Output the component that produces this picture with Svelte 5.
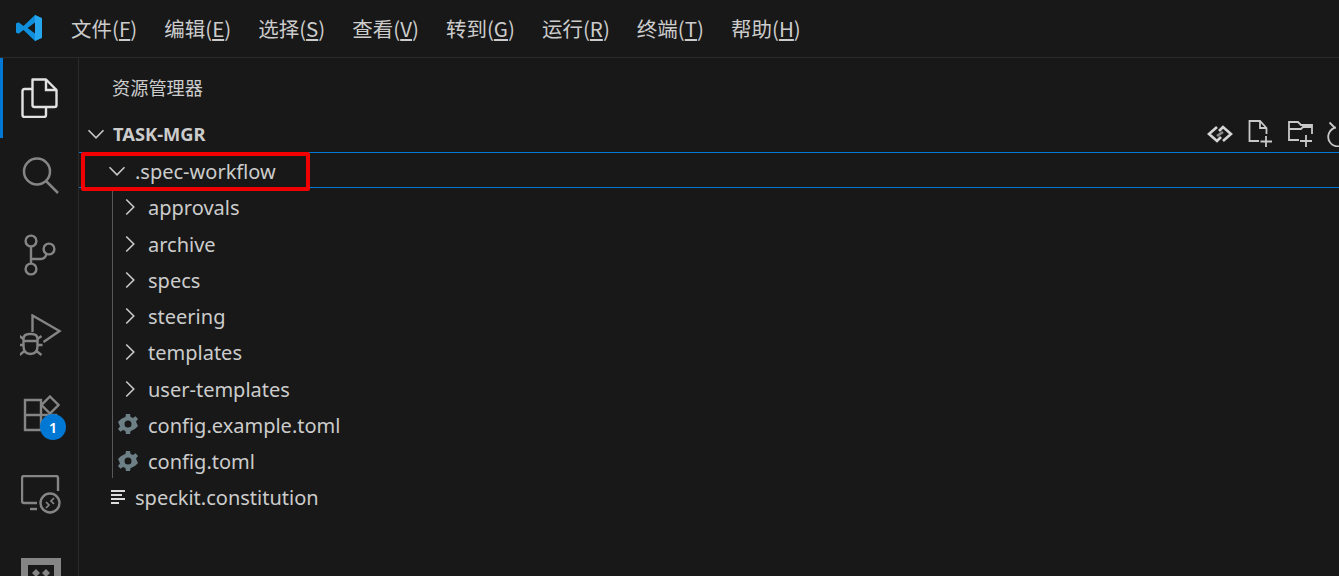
<script>
  const menus = [
    ['文件', 'F'], ['编辑', 'E'], ['选择', 'S'], ['查看', 'V'],
    ['转到', 'G'], ['运行', 'R'], ['终端', 'T'], ['帮助', 'H']
  ];
  const folders = ['approvals', 'archive', 'specs', 'steering', 'templates', 'user-templates'];
  const configs = ['config.example.toml', 'config.toml'];
</script>

<div class="window">
  <header class="titlebar">
    <svg class="logo" viewBox="0 0 28 28" width="28" height="28">
      <path d="M20 1 L27 4.2 V23.8 L20 27 L8.5 16 L3.6 19.8 L1 18.4 V9.6 L3.6 8.2 L8.5 12 Z M20 8.5 L12.6 14 L20 19.5 Z" fill="#0f8fdc" fill-rule="evenodd"/>
      <path d="M20 1 L27 4.2 V23.8 L20 27 Z" fill="#26a6ee"/>
    </svg>
    <nav class="menu">
      {#each menus as [label, key]}
        <span>{label}(<u>{key}</u>)</span>
      {/each}
    </nav>
  </header>

  <div class="body">
    <aside class="activity">
      <div class="act active">
        <svg viewBox="0 0 37 40" width="37" height="40" fill="none" stroke="#e2e2e2" stroke-width="2.4">
          <path d="M11.500 1.500 H25 L35.500 12 V27 Q35.500 29 33.500 29 H13.500 Q11.500 29 11.500 27 V1.500 Z" stroke-linejoin="round"/>
          <path d="M25 1.500 V12 H35.500"/>
          <path d="M11.500 11 H3.500 Q1.500 11 1.500 13 V37 Q1.500 39 3.500 39 H23 Q25 39 25 37 V29"/>
        </svg>
      </div>
      <div class="act search">
        <svg viewBox="0 0 38 38" width="38" height="38" fill="none" stroke="#858585" stroke-width="2.5">
          <circle cx="15" cy="14.500" r="13"/>
          <path d="M24 24 L36 36"/>
        </svg>
      </div>
      <div class="act scm">
        <svg viewBox="0 0 32 42" width="32" height="42" fill="none" stroke="#858585" stroke-width="2.4">
          <circle cx="7" cy="7" r="5.400"/>
          <circle cx="7" cy="35" r="5.400"/>
          <circle cx="25" cy="15" r="5.400"/>
          <path d="M7 12.500 V29.500 M7 25 H17 Q21 25 22.500 20"/>
        </svg>
      </div>
      <div class="act">
        <svg viewBox="0 0 42 44" width="42" height="44" fill="none" stroke="#858585" stroke-width="2.4">
          <path d="M12.500 18 V1.500 L39.500 17 L23.500 28"/>
          <g transform="translate(-1.500 0)">
            <path d="M5 25 Q5 20 11 20 H13 Q19 20 19 25 V32 Q19 40 12 40 Q5 40 5 32 Z"/>
            <path d="M5 27 H19 M1 22 L5 25 M23 22 L19 25 M0 31 H5 M19 31 H24 M1 41 L6 37 M23 41 L18 37"/>
          </g>
        </svg>
      </div>
      <div class="act">
        <div class="ext">
          <svg viewBox="0 0 37 37" width="37" height="37" fill="none" stroke="#858585" stroke-width="2.400">
            <path d="M2 5 H18 V35 H2 Z M2 20 H33 V35 H18"/>
            <path d="M27 1.500 L35.500 10 L27 18.500 L18.500 10 Z" fill="#181818"/>
          </svg>
          <span class="badge">1</span>
        </div>
      </div>
      <div class="act">
        <svg viewBox="0 0 40 40" width="40" height="40" fill="none" stroke="#858585" stroke-width="2.400">
          <path d="M16 28 H3 Q1 28 1 26 V3 Q1 1 3 1 H35 Q37 1 37 3 V16"/>
          <path d="M9 34 H16"/>
          <circle cx="29" cy="28" r="9.500"/>
          <path d="M25 27 L28 30 L25 33 M33 23 L30 26 L33 29" stroke-width="1.700"/>
        </svg>
      </div>
      <div class="act last">
        <svg viewBox="0 0 40 20" width="40" height="20">
          <path d="M0 0 H40 V20 H33 V7 H7 V20 H0 Z" fill="#858585"/>
          <path d="M11 15 L15 11 L19 15 L15 19 Z M21 15 L25 11 L29 15 L25 19 Z" fill="#858585"/>
        </svg>
      </div>
    </aside>

    <main class="sidebar">
      <div class="title">资源管理器</div>
      <div class="section">
        <svg class="chev" viewBox="0 0 16 16" width="20" height="20"><path d="M2 5 L8 11 L14 5" /></svg>
        <strong>TASK-MGR</strong>
        <div class="actions">
          <svg viewBox="0 0 26 18" width="26" height="18" fill="none" stroke="#d4d4d4" stroke-width="2.600">
            <path d="M10 2 L2 9 L10 16 L14 12 M16 16 L24 9 L16 2 L12 6"/>
            <path d="M10 11 L16 7" stroke="#8a8a8a"/>
          </svg>
          <svg viewBox="0 0 24 28" width="24" height="28" fill="none" stroke="#c8c8c8" stroke-width="1.800">
            <path d="M11 21 H1.500 V1 H12 L18.500 8 V14 M12 1 V8 H18.500"/>
            <path d="M12.500 21.500 H24 M18 16 V27"/>
          </svg>
          <svg viewBox="0 0 26 28" width="26" height="28" fill="none" stroke="#c8c8c8" stroke-width="1.800">
            <path d="M12 20 H2 V2 H11 L14 5 H25 V14 M2 9 H14 L16 7 H25"/>
            <path d="M13 21 H25 M19 15 V27"/>
          </svg>
          <svg viewBox="0 0 24 26" width="24" height="26" fill="none" stroke="#c8c8c8" stroke-width="1.800">
            <path d="M3.500 1.500 L9 7 M10 6.500 A9.500 9.500 0 1 0 19 22"/>
          </svg>
        </div>
      </div>

      <div class="tree">
        <div class="row root selected">
          <svg class="chev" viewBox="0 0 16 16" width="20" height="20"><path d="M2 5 L8 11 L14 5" /></svg>
          <span>.spec-workflow</span>
        </div>
        <div class="children">
          {#each folders as name}
            <div class="row">
              <svg class="chev" viewBox="0 0 16 16" width="20" height="20"><path d="M5 2 L11 8 L5 14" /></svg>
              <span>{name}</span>
            </div>
          {/each}
          {#each configs as name}
            <div class="row">
              <svg class="gear" viewBox="0 0 20 20" width="20" height="20">
                <path d="M8 0 H12 L12.600 3 L15 4 L17.500 2.300 L20 5 L18 7.500 L19 10 L20 12 L17.500 14.500 L15 16 L12.600 17 L12 20 H8 L7.400 17 L5 16 L2.500 17.700 L0 15 L2 12.500 L1 10 L0 8 L2.500 5.500 L5 4 L7.400 3 Z M10 6.500 A3.500 3.500 0 1 0 10 13.500 A3.500 3.500 0 1 0 10 6.500 Z" fill="#6d8086" fill-rule="evenodd"/>
              </svg>
              <span>{name}</span>
            </div>
          {/each}
        </div>
        <div class="row root">
          <svg class="lines" viewBox="0 0 16 16" width="16" height="16">
            <path d="M1 2 H15 M1 6 H12 M1 10 H15 M1 14 H9" stroke="#dcdcdc" stroke-width="2"/>
          </svg>
          <span>speckit.constitution</span>
        </div>
        <div class="highlight"></div>
      </div>
    </main>
  </div>
</div>

<style>
  :global(body) {
    background: #181818;
    overflow: hidden;
  }

  .window {
    width: 1339px;
    height: 576px;
    overflow: hidden;
    background: #181818;
    color: #cccccc;
    font-family: "Noto Sans", "Noto Sans CJK SC", sans-serif;
    font-size: 20px;
    display: flex;
    flex-direction: column;
  }

  .titlebar {
    height: 57px;
    flex: none;
    display: flex;
    align-items: center;
    padding-left: 15px;
    border-bottom: 1px solid #2b2b2b;
    box-sizing: content-box;
  }

  .logo {
    flex: none;
    margin-bottom: 1px;
  }

  .menu {
    display: flex;
    gap: 27px;
    margin-left: 28px;
    margin-bottom: 2px;
    font-family: "Noto Sans CJK SC", sans-serif;
    font-size: 20.500px;
  }

  .body {
    flex: 1;
    display: flex;
    min-height: 0;
  }

  .activity {
    width: 78px;
    flex: none;
    border-right: 1px solid #2b2b2b;
    display: flex;
    flex-direction: column;
  }

  .act {
    height: 79.500px;
    flex: none;
    display: flex;
    align-items: center;
    justify-content: center;
    border-left: 3px solid transparent;
    box-sizing: border-box;
  }

  .act.active {
    border-left-color: #0078d4;
    padding-right: 2px;
  }

  .act.search {
    padding-bottom: 2px;
  }

  .act.scm {
    padding-bottom: 4px;
    padding-right: 2px;
  }

  .act.last {
    align-items: flex-start;
    padding-top: 23px;
  }

  .ext {
    position: relative;
    display: flex;
    margin-left: 2px;
    margin-bottom: 4px;
  }

  .badge {
    position: absolute;
    right: -6px;
    bottom: -8px;
    width: 26px;
    height: 26px;
    border-radius: 50%;
    background: #0078d4;
    color: #fff;
    font-size: 15px;
    font-weight: 600;
    display: flex;
    align-items: center;
    justify-content: center;
  }

  .sidebar {
    flex: 1;
    min-width: 0;
    display: flex;
    flex-direction: column;
  }

  .title {
    height: 60px;
    flex: none;
    display: flex;
    align-items: center;
    padding-left: 33px;
    padding-bottom: 2px;
    box-sizing: border-box;
    font-family: "Noto Sans CJK SC", sans-serif;
    font-size: 18.200px;
  }

  .section {
    height: 34px;
    flex: none;
    display: flex;
    align-items: center;
    padding-left: 7px;
    gap: 7px;
    font-size: 18.300px;
  }

  .section strong {
    font-weight: 700;
    margin-bottom: 4px;
  }

  .section .chev {
    margin-bottom: 3px;
  }

  .actions {
    margin-left: auto;
    margin-right: -11px;
    margin-bottom: 3px;
    display: flex;
    align-items: center;
    gap: 15px;
    flex: none;
  }

  .actions svg:last-child {
    margin-left: -2px;
  }

  .chev {
    flex: none;
    fill: none;
    stroke: #c8c8c8;
    stroke-width: 1.300;
  }

  .tree {
    position: relative;
    flex: 1;
  }

  .row {
    height: 36.250px;
    display: flex;
    align-items: center;
    gap: 8px;
    padding-left: 41px;
    padding-top: 2px;
    box-sizing: border-box;
  }

  .row span {
    line-height: 1;
    margin-top: 2px;
  }

  .row.root {
    padding-left: 28px;
  }

  .row.selected {
    border-top: 1px solid #0078d4;
    border-bottom: 1px solid #0078d4;
    padding-left: 28px;
  }

  .children {
    margin-left: 33px;
    border-left: 1px solid #585858;
  }

  .children .row {
    padding-left: 7px;
  }

  .gear {
    margin-left: -2px;
    margin-right: 2px;
    margin-top: -1px;
  }

  .lines {
    margin-left: 3px;
    margin-right: 1px;
  }

  .highlight {
    position: absolute;
    left: 2px;
    top: 0;
    width: 229px;
    height: 39px;
    border: 4px solid #f00000;
    border-radius: 2px;
    box-sizing: border-box;
    pointer-events: none;
  }
</style>
